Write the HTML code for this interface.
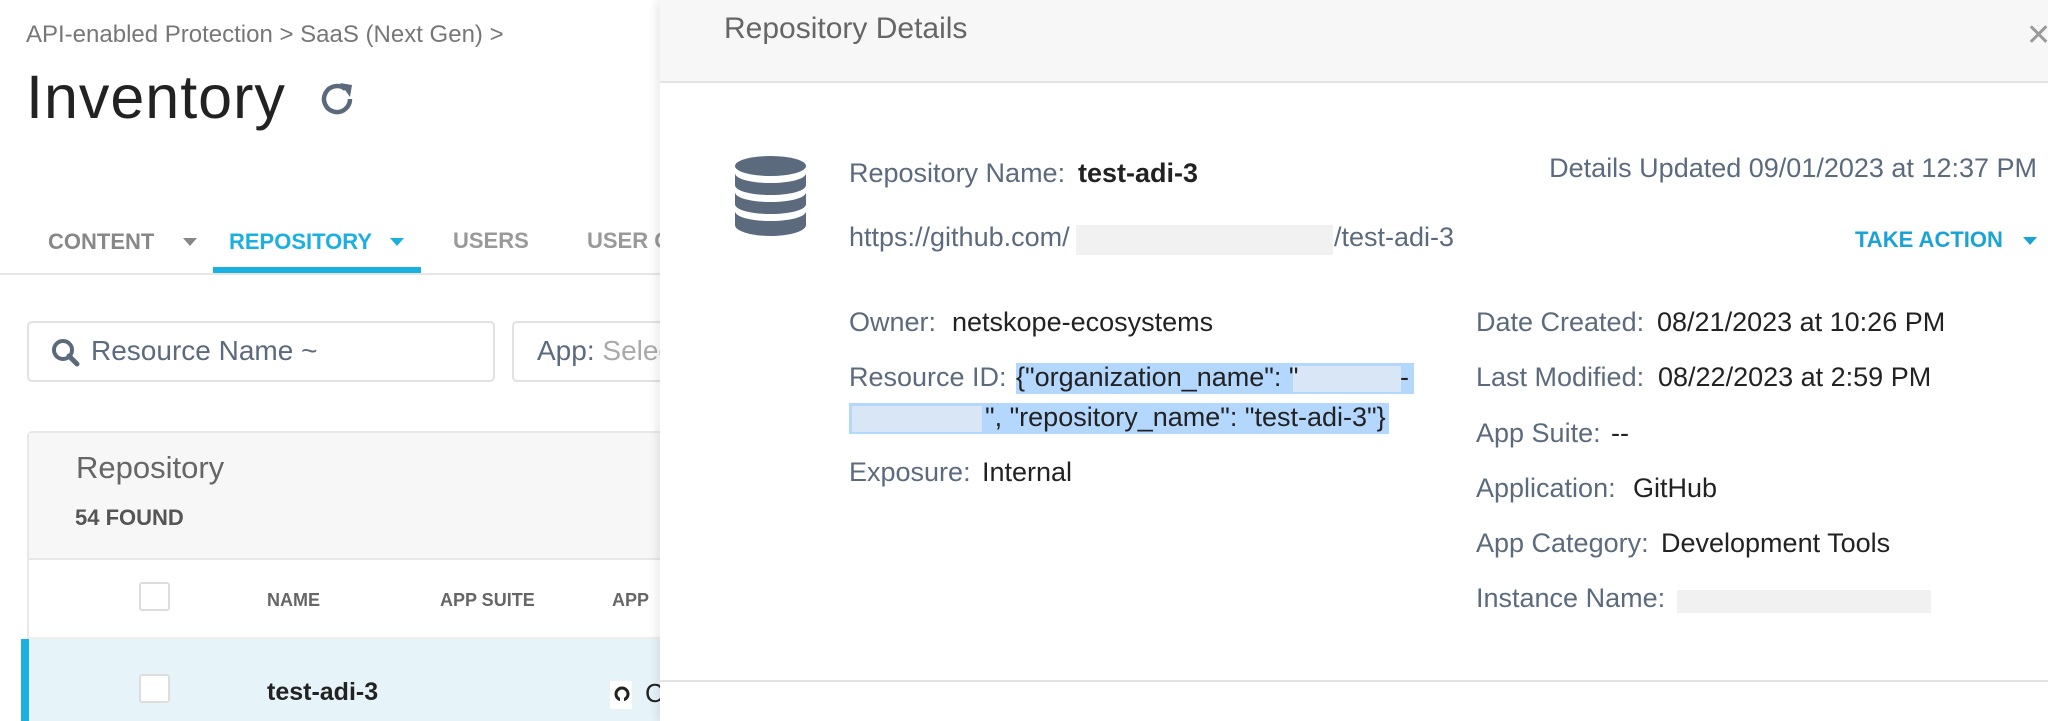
<!DOCTYPE html>
<html><head><meta charset="utf-8"><style>
*{margin:0;padding:0;box-sizing:border-box}
body{width:2048px;height:721px;overflow:hidden;background:#fff;font-family:"Liberation Sans",sans-serif;position:relative}
.a{position:absolute;white-space:nowrap}
.lbl{color:#5b6b7d;font-size:27px}
.val{color:#222;font-size:27px}
</style></head><body>
<div class="a" style="left:26px;top:21px;font-size:24px;color:#777">API-enabled Protection &gt; SaaS (Next Gen) &gt;</div>
<div class="a" style="left:26px;top:62px;font-size:61px;color:#222;letter-spacing:1px">Inventory</div>
<svg class="a" style="left:316px;top:78px" width="42" height="42" viewBox="0 0 42 42"><path d="M34 21a13 13 0 1 1-4.5-9.8" fill="none" stroke="#5a6a7c" stroke-width="4.5"/><path d="M24 5l12 2-2 12z" fill="#5a6a7c"/></svg>
<div class="a" style="left:48px;top:229px;font-size:22px;color:#888;font-weight:bold">CONTENT</div>
<div class="a" style="left:183px;top:238px;border:7px solid transparent;border-top:8px solid #888;border-bottom:0"></div>
<div class="a" style="left:229px;top:229px;font-size:22px;color:#1ab0e0;font-weight:bold">REPOSITORY</div>
<div class="a" style="left:390px;top:238px;border:7px solid transparent;border-top:8px solid #1ab0e0;border-bottom:0"></div>
<div class="a" style="left:213px;top:267px;width:208px;height:6px;background:#1ab0e0"></div>
<div class="a" style="left:453px;top:228px;font-size:22px;color:#999;font-weight:bold">USERS</div>
<div class="a" style="left:587px;top:228px;font-size:22px;color:#999;font-weight:bold">USER C</div>
<div class="a" style="left:0;top:273px;width:660px;height:2px;background:#e6e6e6"></div>
<div class="a" style="left:27px;top:321px;width:468px;height:61px;border:2px solid #e2e2e2;border-radius:5px"></div>
<svg class="a" style="left:51px;top:338px" width="30" height="30" viewBox="0 0 30 30"><circle cx="12" cy="12" r="9" fill="none" stroke="#5a6a7c" stroke-width="4"/><path d="M18 18l8 8" stroke="#5a6a7c" stroke-width="5" stroke-linecap="round"/></svg>
<div class="a" style="left:91px;top:335px;font-size:28px;color:#5b6b7d">Resource Name ~</div>
<div class="a" style="left:512px;top:321px;width:160px;height:61px;border:2px solid #e2e2e2;border-radius:5px"></div>
<div class="a" style="left:537px;top:335px;font-size:28px;color:#5b6b7d">App: <span style="color:#aaa">Select</span></div>
<div class="a" style="left:27px;top:431px;width:650px;height:290px;border:2px solid #e8e8e8;border-radius:5px 0 0 0"></div>
<div class="a" style="left:29px;top:433px;width:640px;height:127px;background:#f7f7f7;border-bottom:2px solid #e8e8e8"></div>
<div class="a" style="left:76px;top:450px;font-size:31px;color:#666">Repository</div>
<div class="a" style="left:75px;top:505px;font-size:22px;color:#555;font-weight:bold">54 FOUND</div>
<div class="a" style="left:139px;top:582px;width:31px;height:29px;border:2px solid #ddd;border-radius:3px;background:#fff"></div>
<div class="a" style="left:267px;top:590px;font-size:18px;color:#666;font-weight:bold">NAME</div>
<div class="a" style="left:440px;top:590px;font-size:18px;color:#666;font-weight:bold">APP SUITE</div>
<div class="a" style="left:612px;top:590px;font-size:18px;color:#666;font-weight:bold">APP</div>
<div class="a" style="left:29px;top:637px;width:640px;height:2px;background:#eee"></div>
<div class="a" style="left:21px;top:639px;width:650px;height:82px;background:#e6f4fa"></div>
<div class="a" style="left:21px;top:639px;width:8px;height:82px;background:#1ab0e0"></div>
<div class="a" style="left:139px;top:674px;width:31px;height:29px;border:2px solid #ddd;border-radius:3px;background:#fff"></div>
<div class="a" style="left:267px;top:678px;font-size:25px;color:#222;font-weight:bold">test-adi-3</div>
<div class="a" style="left:610px;top:681px;width:22px;height:28px;background:#fff"></div>
<svg class="a" style="left:614px;top:686px" width="16" height="16" viewBox="0 0 16 16"><circle cx="8" cy="8" r="6" fill="none" stroke="#222" stroke-width="3"/><rect x="6" y="12" width="4" height="4" fill="#fff"/></svg>
<div class="a" style="left:645px;top:678px;font-size:26px;color:#222">C</div>

<div class="a" style="left:660px;top:0;width:1388px;height:721px;background:#fff;box-shadow:-4px 0 8px rgba(0,0,0,0.08)"></div>
<div class="a" style="left:660px;top:0;width:1388px;height:83px;background:#f7f7f7;border-bottom:2px solid #e3e3e3"></div>
<div class="a" style="left:724px;top:12px;font-size:30px;color:#666">Repository Details</div>
<div class="a" style="left:2026px;top:18px;font-size:30px;color:#999">✕</div>
<svg class="a" style="left:735px;top:156px" width="71" height="80" viewBox="0 0 71 80"><g fill="#5b6b7d"><ellipse cx="35.5" cy="10" rx="35.5" ry="10"/><path d="M0 17c0 6 16 10 35.5 10S71 23 71 17v12c0 6-16 10-35.5 10S0 35 0 29z"/><path d="M0 36c0 6 16 10 35.5 10S71 42 71 36v12c0 6-16 10-35.5 10S0 54 0 48z"/><path d="M0 55c0 6 16 10 35.5 10S71 61 71 55v14c0 6-16 11-35.5 11S0 75 0 69z"/></g></svg>
<div class="a lbl" style="left:849px;top:158px">Repository Name:</div>
<div class="a val" style="left:1078px;top:158px;font-weight:bold">test-adi-3</div>
<div class="a lbl" style="left:1500px;top:153px;width:537px;text-align:right">Details Updated 09/01/2023 at 12:37 PM</div>
<div class="a lbl" style="left:849px;top:222px">https://github.com/</div>
<div class="a" style="left:1076px;top:225px;width:257px;height:30px;background:#f1f1f1"></div>
<div class="a lbl" style="left:1334px;top:222px">/test-adi-3</div>
<div class="a" style="left:1855px;top:227px;font-size:22px;color:#1aa3d4;font-weight:bold">TAKE ACTION</div>
<div class="a" style="left:2023px;top:237px;border:7px solid transparent;border-top:8px solid #1aa3d4;border-bottom:0"></div>
<div class="a lbl" style="left:849px;top:307px">Owner:</div>
<div class="a val" style="left:952px;top:307px">netskope-ecosystems</div>
<div class="a" style="left:1016px;top:363px;width:398px;height:31px;background:#b4d7fe"></div>
<div class="a" style="left:849px;top:403px;width:540px;height:31px;background:#b4d7fe"></div>
<div class="a" style="left:1293px;top:366px;width:108px;height:26px;background:#d8e6f6"></div>
<div class="a" style="left:852px;top:406px;width:130px;height:26px;background:#d8e6f6"></div>
<div class="a lbl" style="left:849px;top:362px">Resource ID:</div>
<div class="a val" style="left:1016px;top:362px">{"organization_name": "</div>
<div class="a val" style="left:1400px;top:362px">-</div>
<div class="a val" style="left:985px;top:402px">", "repository_name": "test-adi-3"}</div>
<div class="a lbl" style="left:849px;top:457px">Exposure:</div>
<div class="a val" style="left:982px;top:457px">Internal</div>
<div class="a lbl" style="left:1476px;top:307px">Date Created:</div>
<div class="a val" style="left:1657px;top:307px">08/21/2023 at 10:26 PM</div>
<div class="a lbl" style="left:1476px;top:362px">Last Modified:</div>
<div class="a val" style="left:1658px;top:362px">08/22/2023 at 2:59 PM</div>
<div class="a lbl" style="left:1476px;top:418px">App Suite:</div>
<div class="a val" style="left:1611px;top:418px">--</div>
<div class="a lbl" style="left:1476px;top:473px">Application:</div>
<div class="a val" style="left:1633px;top:473px">GitHub</div>
<div class="a lbl" style="left:1476px;top:528px">App Category:</div>
<div class="a val" style="left:1661px;top:528px">Development Tools</div>
<div class="a lbl" style="left:1476px;top:583px">Instance Name:</div>
<div class="a" style="left:1677px;top:590px;width:254px;height:23px;background:#f1f1f1"></div>
<div class="a" style="left:660px;top:680px;width:1388px;height:2px;background:#e3e3e3"></div>
</body></html>
